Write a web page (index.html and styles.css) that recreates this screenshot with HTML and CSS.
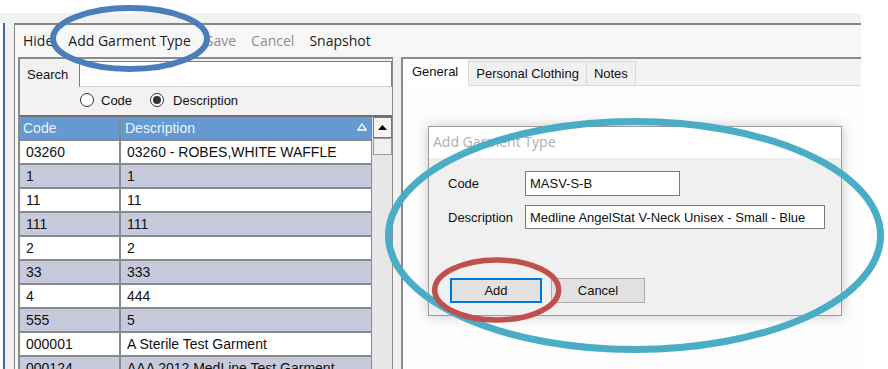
FILE: index.html
```html
<!DOCTYPE html>
<html>
<head>
<meta charset="utf-8">
<link rel="stylesheet" href="styles.css">
</head>
<body>
<div class="app">
  <div class="app-strip"></div>
  <div class="app-row">
    <div class="rail-white"></div>
    <div class="rail-blue"></div>
    <div class="rail-gap"></div>
    <div class="window">
      <div class="toolbar">
        <span class="tb-item">Hide</span>
        <span class="tb-item">Add Garment Type</span>
        <span class="tb-item disabled">Save</span>
        <span class="tb-item disabled">Cancel</span>
        <span class="tb-item">Snapshot</span>
      </div>
      <div class="main">
        <div class="left-panel">
          <div class="search-row">
            <span class="search-label">Search</span>
            <div class="search-input"></div>
          </div>
          <div class="radio-row">
            <span class="radio"></span><span class="radio-text">Code</span>
            <span class="radio checked"></span><span class="radio-text">Description</span>
          </div>
          <div class="grid">
            <div class="grid-table">
              <div class="row head">
                <div class="cell">Code</div>
                <div class="cell">Description<svg class="sort" width="10" height="8" viewBox="0 0 10 8"><path d="M5 1 L9 7 L1 7 Z" fill="none" stroke="#fff" stroke-width="1.3"/></svg></div>
              </div>
              <div class="row"><div class="cell">03260</div><div class="cell">03260 - ROBES,WHITE WAFFLE</div></div>
              <div class="row alt"><div class="cell">1</div><div class="cell">1</div></div>
              <div class="row"><div class="cell">11</div><div class="cell">11</div></div>
              <div class="row alt"><div class="cell">111</div><div class="cell">111</div></div>
              <div class="row"><div class="cell">2</div><div class="cell">2</div></div>
              <div class="row alt"><div class="cell">33</div><div class="cell">333</div></div>
              <div class="row"><div class="cell">4</div><div class="cell">444</div></div>
              <div class="row alt"><div class="cell">555</div><div class="cell">5</div></div>
              <div class="row"><div class="cell">000001</div><div class="cell">A Sterile Test Garment</div></div>
              <div class="row alt"><div class="cell">000124</div><div class="cell">AAA 2012 MedLine Test Garment</div></div>
            </div>
            <div class="vscroll">
              <div class="vs-up"><svg width="9" height="5" viewBox="0 0 9 5"><path d="M4.5 0 L9 5 L0 5 Z" fill="#000"/></svg></div>
              <div class="vs-thumb"></div>
            </div>
          </div>
        </div>
        <div class="splitter"></div>
        <div class="right-panel">
          <div class="tabs">
            <div class="tab active">General</div>
            <div class="tab">Personal Clothing</div>
            <div class="tab">Notes</div>
            <div class="tab-fill"></div>
          </div>
          <div class="tab-page"></div>
        </div>
      </div>
    </div>
  </div>
</div>

<div class="dialog">
  <div class="dlg-title">Add Garment Type</div>
  <div class="dlg-body">
    <div class="dlg-form">
      <span class="dlg-label">Code</span>
      <div class="dlg-input code">MASV-S-B</div>
      <span class="dlg-label">Description</span>
      <div class="dlg-input desc">Medline AngelStat V-Neck Unisex - Small - Blue</div>
    </div>
    <div class="dlg-buttons">
      <div class="btn default">Add</div>
      <div class="btn">Cancel</div>
    </div>
  </div>
</div>

<svg class="annotations" width="888" height="369" viewBox="0 0 888 369">
  <ellipse cx="130" cy="38.5" rx="77" ry="30.5" fill="none" stroke="#4a7ebb" stroke-width="6"/>
  <ellipse cx="634.5" cy="235.5" rx="246" ry="114" fill="none" stroke="#4bacc6" stroke-width="7"/>
  <ellipse cx="496.7" cy="290" rx="62" ry="30" fill="none" stroke="#c0504d" stroke-width="5.5"/>
</svg>
</body>
</html>
```
FILE: styles.css
```css
* { box-sizing: border-box; }

body {
  margin: 0;
  width: 888px;
  height: 369px;
  overflow: hidden;
  position: relative;
  background: #fff;
  font-family: "Liberation Sans", Arial, sans-serif;
  font-size: 13px;
  color: #111;
}

.app {
  margin-top: 13px;
  width: 861px;
  height: 356px;
  display: flex;
  flex-direction: column;
  background: #f2f2f2;
}
.app-strip { height: 10px; }
.app-row { flex: 1; display: flex; min-height: 0; }
.rail-white { width: 3px; background: #fff; }
.rail-blue { width: 2px; background: #4468ad; }
.rail-gap { width: 9px; }

.window {
  flex: 1;
  min-width: 0;
  display: flex;
  flex-direction: column;
  border-top: 2px solid #858585;
  border-left: 1px solid #858585;
  background: #f7f7f7;
}

.toolbar {
  height: 32px;
  display: flex;
  align-items: center;
  gap: 15px;
  padding: 0 0 2px 8px;
  font-family: "Open Sans", sans-serif;
  font-size: 14px;
  color: #1c1c24;
}
.tb-item.disabled { color: #8e8e8e; }

.main { flex: 1; display: flex; min-height: 0; padding-left: 3px; }

.left-panel {
  width: 375px;
  border: 2px solid #8a8a8a;
  border-right-width: 1px;
  border-bottom: 0;
  background: #f2f2f2;
  display: flex;
  flex-direction: column;
}
.search-row {
  height: 30px;
  display: flex;
  align-items: center;
}
.search-label { width: 59px; padding-left: 7px; }
.search-input {
  flex: 1;
  height: 26px;
  background: #fff;
  border: 1px solid #7d7d7d;
  border-bottom-color: #d4d4d4;
}
.radio-row {
  height: 22px;
  display: flex;
  align-items: center;
  padding-left: 60px;
}
.radio {
  width: 14px;
  height: 14px;
  border: 1px solid #333;
  border-radius: 50%;
  background: #fff;
  display: flex;
  align-items: center;
  justify-content: center;
}
.radio.checked::after {
  content: "";
  width: 8px;
  height: 8px;
  border-radius: 50%;
  background: #333;
}
.radio-text { margin: 0 18px 0 7px; }
.radio-text:last-child { margin-left: 9px; }

.grid {
  margin-top: 4px;
  flex: 1;
  min-height: 0;
  display: flex;
  border-top: 2px solid #707070;
  overflow: hidden;
}
.grid-table { width: 351px; font-size: 14px; }
.row {
  display: grid;
  grid-template-columns: 101px 250px;
  height: 24px;
  background: #fff;
}
.row.alt { background: #c6cadc; }
.cell {
  border-bottom: 2px solid #8a8a8a;
  padding-left: 6px;
  display: flex;
  align-items: center;
  white-space: nowrap;
}
.cell:first-child { border-right: 2px solid #8a8a8a; }
.row.head { background: #6499d1; color: #eef3fa; }
.row.head .cell { padding-left: 3px; }
.row.head .cell:last-child { padding-left: 4px; justify-content: space-between; padding-right: 4px; }
.sort { margin-top: -2px; }

.vscroll {
  width: 21px;
  border-left: 1px solid #8a8a8a;
  background: #e6e6e6;
  display: flex;
  flex-direction: column;
  padding-left: 1px;
}
.vs-up {
  height: 21px;
  border: 1px solid #7a7a7a;
  background: #f4f4f4;
  display: flex;
  align-items: center;
  justify-content: center;
}
.vs-thumb {
  height: 17px;
  border: 1px solid #9a9a9a;
  background: #f0f0f0;
}

.splitter { width: 8px; background: #f0f0f0; }

.right-panel {
  flex: 1;
  display: flex;
  flex-direction: column;
  border-top: 2px solid #8a8a8a;
  border-left: 2px solid #8a8a8a;
  background: #fff;
}
.tabs {
  height: 27px;
  display: flex;
  align-items: flex-end;
  background: #f3f3f3;
}
.tab {
  height: 25px;
  padding: 0 7px;
  border: 1px solid #d9d9d9;
  border-left: 0;
  background: #f0f0f0;
  display: flex;
  align-items: center;
  white-space: nowrap;
}
.tab.active {
  height: 27px;
  padding: 0 10px 3px 9px;
  background: #fff;
  border-top: 0;
  border-bottom: 0;
}
.tab-fill { flex: 1; align-self: stretch; border-bottom: 1px solid #d9d9d9; }
.tab-page { flex: 1; background: #fdfdfd; }

.dialog {
  position: absolute;
  left: 428px;
  top: 126px;
  width: 414px;
  height: 190px;
  border: 1px solid #9c9c9c;
  background: #f0f0f0;
  box-shadow: 0 0 12px rgba(0, 0, 0, 0.22);
  display: flex;
  flex-direction: column;
}
.dlg-title {
  height: 31px;
  background: #fff;
  padding: 0 0 2px 4px;
  display: flex;
  align-items: center;
  font-family: "Open Sans", sans-serif;
  font-size: 14px;
  color: #aeaeae;
}
.dlg-body { flex: 1; padding: 13px 0 0 19px; }
.dlg-form {
  display: grid;
  grid-template-columns: 77px auto;
  row-gap: 9px;
  align-items: center;
  justify-items: start;
}
.dlg-input {
  height: 25px;
  background: #fff;
  border: 1px solid #7a7a7a;
  padding-left: 4px;
  display: flex;
  align-items: center;
  white-space: nowrap;
}
.dlg-input.code { width: 155px; }
.dlg-input.desc { width: 300px; height: 24px; }
.dlg-buttons {
  margin-top: 49px;
  margin-left: 2px;
  display: flex;
  gap: 9px;
}
.btn {
  width: 94px;
  height: 25px;
  background: #e1e1e1;
  border: 1px solid #adadad;
  display: flex;
  align-items: center;
  justify-content: center;
}
.btn.default { width: 92px; border: 2px solid #0078d7; }

.annotations {
  position: absolute;
  left: 0;
  top: 0;
  pointer-events: none;
}
```
